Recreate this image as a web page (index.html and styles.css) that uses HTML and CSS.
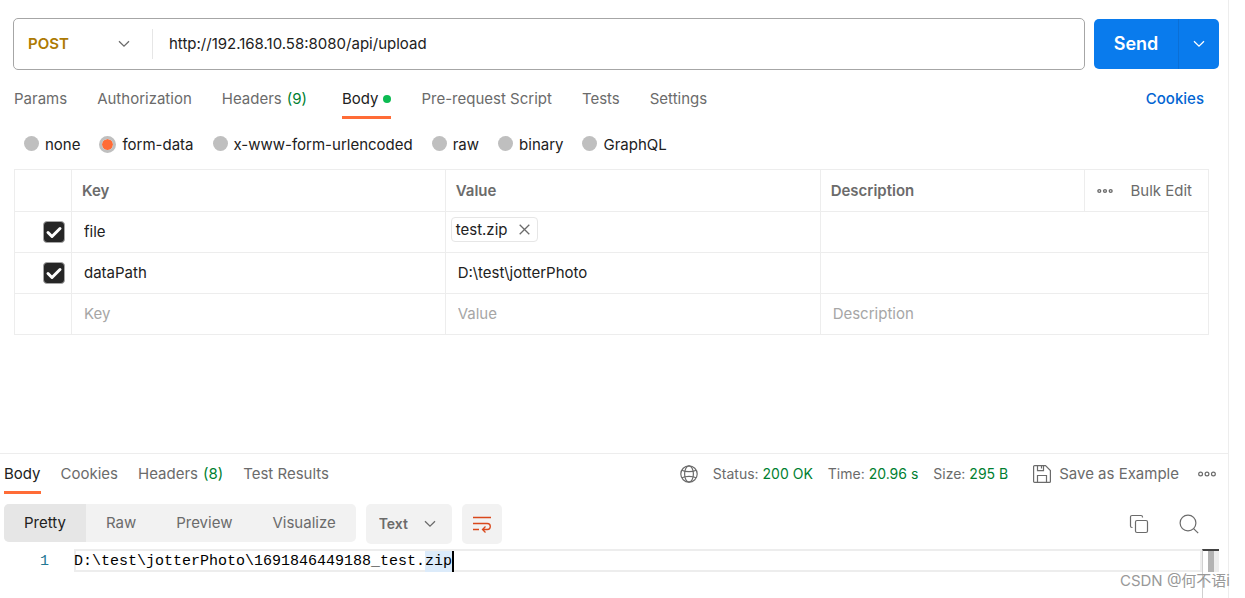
FILE: index.html
```html
<!DOCTYPE html>
<html lang="en">
<head>
    <meta charset="UTF-8">
    <meta name="viewport" content="width=device-width, initial-scale=1.0">
    <title>POST upload</title>
    <link rel="stylesheet" href="styles.css">
</head>
<body>
    <div class="app">
        <section class="request">
            <form class="request-bar">
                <div class="url-box">
                    <select class="method" aria-label="Method">
                        <option>POST</option>
                        <option>GET</option>
                    </select>
                    <input class="url" type="text" aria-label="URL" value="http://192.168.10.58:8080/api/upload">
                </div>
                <div class="send-group">
                    <button class="send" type="button">Send</button>
                    <button class="send-more" type="button" aria-label="Send options">
                        <svg width="12" height="8" viewBox="0 0 12 8" fill="none" stroke="currentColor" stroke-width="1.3"><path d="M1 1.2l5 5 5-5"/></svg>
                    </button>
                </div>
            </form>

            <nav class="tabs request-tabs">
                <button class="tab" type="button">Params</button>
                <button class="tab" type="button">Authorization</button>
                <button class="tab tab-count" type="button">Headers <span class="green">(9)</span></button>
                <button class="tab active" type="button">Body<span class="dot"></span></button>
                <button class="tab" type="button">Pre-request Script</button>
                <button class="tab" type="button">Tests</button>
                <button class="tab" type="button">Settings</button>
                <a class="cookies" href="#">Cookies</a>
            </nav>

            <div class="body-types">
                <label><input type="radio" name="type">none</label>
                <label><input type="radio" name="type" checked>form-data</label>
                <label><input type="radio" name="type">x-www-form-urlencoded</label>
                <label><input type="radio" name="type">raw</label>
                <label><input type="radio" name="type">binary</label>
                <label><input type="radio" name="type">GraphQL</label>
            </div>

            <table class="params">
                <colgroup>
                    <col class="col-check">
                    <col class="col-key">
                    <col class="col-value">
                    <col>
                    <col class="col-actions">
                </colgroup>
                <thead>
                    <tr>
                        <th></th>
                        <th>Key</th>
                        <th>Value</th>
                        <th>Description</th>
                        <th>
                            <div class="actions">
                                <button type="button" aria-label="Columns">
                                    <svg width="16" height="6" viewBox="0 0 16 6" fill="none" stroke="currentColor" stroke-width="1.4"><circle cx="2.3" cy="3" r="1.4"/><circle cx="8" cy="3" r="1.4"/><circle cx="13.7" cy="3" r="1.4"/></svg>
                                </button>
                                <button type="button">Bulk Edit</button>
                            </div>
                        </th>
                    </tr>
                </thead>
                <tbody>
                    <tr>
                        <td class="check"><input type="checkbox" aria-label="Use file" checked></td>
                        <td><input type="text" aria-label="Key" value="file"></td>
                        <td class="file-cell">
                            <span class="file">test.zip
                                <button type="button" aria-label="Remove file">
                                    <svg width="11" height="11" viewBox="0 0 11 11" fill="none" stroke="currentColor" stroke-width="1.3"><path d="M.7.7l9.6 9.6M10.3.7L.7 10.3"/></svg>
                                </button>
                            </span>
                        </td>
                        <td colspan="2"><input type="text" aria-label="Description"></td>
                    </tr>
                    <tr>
                        <td class="check"><input type="checkbox" aria-label="Use dataPath" checked></td>
                        <td><input type="text" aria-label="Key" value="dataPath"></td>
                        <td><input type="text" aria-label="Value" value="D:\test\jotterPhoto"></td>
                        <td colspan="2"><input type="text" aria-label="Description"></td>
                    </tr>
                    <tr>
                        <td></td>
                        <td><input type="text" aria-label="Key" placeholder="Key"></td>
                        <td><input type="text" aria-label="Value" placeholder="Value"></td>
                        <td colspan="2"><input type="text" aria-label="Description" placeholder="Description"></td>
                    </tr>
                </tbody>
            </table>
        </section>

        <section class="response">
            <div class="response-head">
                <nav class="tabs response-tabs">
                    <button class="tab active" type="button">Body</button>
                    <button class="tab" type="button">Cookies</button>
                    <button class="tab" type="button">Headers <span class="green">(8)</span></button>
                    <button class="tab" type="button">Test Results</button>
                </nav>
                <div class="status">
                    <svg width="18" height="18" viewBox="0 0 18 18" fill="none" stroke="currentColor" stroke-width="1.2"><circle cx="9" cy="9" r="8.2"/><ellipse cx="9" cy="9" rx="4.4" ry="8.2"/><path d="M1.8 5.2c4 2 10.4 2 14.4 0M1.8 12.8c4-2 10.4-2 14.4 0"/></svg>
                    <span>Status: <span class="green">200 OK</span></span>
                    <span>Time: <span class="green">20.96 s</span></span>
                    <span>Size: <span class="green">295 B</span></span>
                    <button class="save" type="button">
                        <svg width="18" height="18" viewBox="0 0 18 18" fill="none" stroke="currentColor" stroke-width="1.2"><path d="M1.6.6h10.9l4.9 4.9v10.9a1 1 0 0 1-1 1H1.6a1 1 0 0 1-1-1V1.6a1 1 0 0 1 1-1zM4.5.6v5h6v-5M8.5.6v2.8M4.5 17.4v-6.9h9v6.9"/></svg>
                        Save as Example
                    </button>
                    <button type="button" aria-label="More">
                        <svg width="18" height="6" viewBox="0 0 18 6" fill="none" stroke="currentColor" stroke-width="1.2"><circle cx="2.6" cy="3" r="1.9"/><circle cx="9" cy="3" r="1.9"/><circle cx="15.4" cy="3" r="1.9"/></svg>
                    </button>
                </div>
            </div>

            <div class="toolbar">
                <div class="views">
                    <button class="selected" type="button">Pretty</button>
                    <button type="button">Raw</button>
                    <button type="button">Preview</button>
                    <button type="button">Visualize</button>
                </div>
                <select class="format" aria-label="Format">
                    <option>Text</option>
                    <option>JSON</option>
                </select>
                <button class="wrap" type="button" aria-label="Wrap lines">
                    <svg width="18" height="18" viewBox="0 0 18 18" fill="none" stroke="currentColor" stroke-width="1.3"><path d="M0 2.5h18M0 8.5h14.3a2.9 2.9 0 0 1 0 6H9.5M0 14.5h6M12.5 11.5l-3 3 3 3"/></svg>
                </button>
                <div class="tools">
                    <button type="button" aria-label="Copy">
                        <svg width="20" height="20" viewBox="0 0 20 20" fill="none" stroke="currentColor" stroke-width="1.2"><rect x="6.5" y="6.5" width="12" height="12" rx="1.5"/><path d="M3.5 13.5H3A1.5 1.5 0 0 1 1.5 12V3A1.5 1.5 0 0 1 3 1.5h9A1.5 1.5 0 0 1 13.500 3v.5"/></svg>
                    </button>
                    <button type="button" aria-label="Search">
                        <svg width="20" height="20" viewBox="0 0 20 20" fill="none" stroke="currentColor" stroke-width="1.2"><circle cx="9" cy="9" r="7.9"/><path d="M14.6 14.6l4.6 4.6"/></svg>
                    </button>
                </div>
            </div>

            <div class="editor">
                <span class="line-number">1</span>
                <code class="line">D:\test\jotterPhoto\1691846449188_test.<span class="word">zip</span></code>
                <div class="ruler"><span class="thumb"></span></div>
            </div>
        </section>
        <span class="watermark">CSDN @何不语i</span>
    </div>
</body>
</html>
```

FILE: styles.css
```css
* {
    box-sizing: border-box;
}

body {
    margin: 0;
    padding-right: 16px;
    background-color: #fff;
    color: #212121;
    font-family: Inter, "Noto Sans CJK SC", sans-serif;
    font-size: 15px;
    line-height: 20px;
}

button, input, select {
    margin: 0;
    padding: 0;
    border: none;
    background-color: transparent;
    color: inherit;
    font: inherit;
}

button {
    cursor: pointer;
}

svg {
    display: block;
}

.green {
    color: #007f31;
}

.app {
    position: relative;
    display: flex;
    flex-direction: column;
    min-height: 100vh;
    border-right: 1px solid #ededed;
}

.request {
    flex: 1;
    padding: 18px 9px 0 13px;
}

/* url bar */
.request-bar {
    display: flex;
    align-items: center;
    gap: 9px;
}

.url-box {
    flex: 1;
    display: flex;
    align-items: center;
    height: 52px;
    border: 1px solid #a6a6a6;
    border-radius: 5px;
}

.method, .format {
    appearance: none;
    background-image: url("data:image/svg+xml,%3Csvg xmlns='http://www.w3.org/2000/svg' width='12' height='8' fill='none' stroke='%236b6b6b' stroke-width='1.3'%3E%3Cpath d='M1 1.2l5 5 5-5'/%3E%3C/svg%3E");
    background-repeat: no-repeat;
    font-weight: 600;
}

.method {
    width: 139px;
    height: 30px;
    padding-left: 14px;
    border-right: 1px solid #e6e6e6;
    background-position: right 22px center;
    color: #ad7a03;
}

.url {
    flex: 1;
    padding: 0 16px;
}

.send-group {
    display: flex;
    height: 50px;
    border-radius: 5px;
    background-color: #097bed;
    color: #fff;
    overflow: hidden;
}

.send {
    width: 84px;
    font-size: 18px;
    font-weight: 600;
}

.send-more {
    display: grid;
    place-items: center;
    width: 41px;
    border-left: 1px solid #0a6fd6;
}

/* tabs */
.tabs {
    display: flex;
    color: #6b6b6b;
}

.request-tabs {
    gap: 30px;
    margin-top: 19px;
    padding: 0 15px 0 1px;
}

.response-tabs {
    gap: 20px;
}

.tab {
    display: flex;
    align-items: center;
    gap: 5px;
    padding-bottom: 7px;
    border-bottom: 3px solid transparent;
}

.tab-count {
    padding-right: 5px;
}

.tab.active {
    border-bottom-color: #ff6c37;
    color: #212121;
}

.dot {
    width: 8px;
    height: 8px;
    border-radius: 50%;
    background-color: #0cbb52;
}

.cookies {
    margin-left: auto;
    color: #0265d2;
    font-weight: 500;
    text-decoration: none;
}

.body-types {
    display: flex;
    gap: 19px;
    padding: 16px 11px 14px;
}

.body-types label {
    display: flex;
    align-items: flex-start;
    gap: 6px;
}

.body-types input {
    appearance: none;
    width: 15px;
    height: 15px;
    margin-top: 1px;
    border-radius: 50%;
    background-color: #bfbfbf;
}

.body-types input:checked {
    width: 17px;
    height: 17px;
    border: 3px solid #bfbfbf;
    background-color: #ff6c37;
    background-clip: padding-box;
}

/* form-data table */
.params {
    width: calc(100% - 11px);
    margin-left: 1px;
    table-layout: fixed;
    border-collapse: collapse;
}

.col-check {
    width: 57px;
}

.col-key {
    width: 31.3%;
}

.col-value {
    width: 31.4%;
}

.col-actions {
    width: 124px;
}

.params th, .params td {
    height: 41px;
    padding: 0 12px;
    border: 1px solid #ededed;
    text-align: left;
}

.params th {
    height: 42px;
    padding: 0 10px;
    color: #6b6b6b;
    font-weight: 600;
}

.params input[type="text"] {
    display: block;
    width: 100%;
}

.params input::placeholder {
    color: #a6a6a6;
}

.params .check {
    padding: 0 6px 0 0;
}

.check input {
    appearance: none;
    display: block;
    width: 22px;
    height: 22px;
    margin-left: auto;
    border: 1px solid #a6a6a6;
    border-radius: 4px;
}

.check input:checked {
    background: #262626 url("data:image/svg+xml,%3Csvg xmlns='http://www.w3.org/2000/svg' width='20' height='20' fill='none' stroke='white' stroke-width='3' stroke-linecap='round' stroke-linejoin='round'%3E%3Cpath d='M4 10.5l4 4 8-8'/%3E%3C/svg%3E") center no-repeat;
}

.params .file-cell {
    padding: 0 0 5px 5px;
}

.file {
    display: inline-flex;
    align-items: center;
    gap: 12px;
    height: 25px;
    padding: 0 7px 0 4px;
    border: 1px solid #e6e6e6;
    border-radius: 4px;
    vertical-align: middle;
}

.file button {
    color: #6b6b6b;
}

.actions {
    display: flex;
    align-items: center;
    justify-content: space-between;
    padding: 0 6px 0 2px;
    font-weight: 400;
}

/* response */
.response {
    border-top: 1px solid #ededed;
}

.response-head {
    display: flex;
    justify-content: space-between;
    padding: 10px 12px 0 4px;
}

.status {
    display: flex;
    align-items: center;
    gap: 15px;
    height: 20px;
    color: #6b6b6b;
    font-size: 14px;
}

.save {
    display: flex;
    align-items: center;
    gap: 8px;
    margin: 0 4px 0 10px;
    font-size: 15px;
}

.toolbar {
    display: flex;
    gap: 10px;
    padding: 10px 29px 5px 4px;
    color: #6b6b6b;
}

.views {
    display: flex;
    height: 38px;
    border-radius: 5px;
    background-color: #f2f2f2;
    overflow: hidden;
}

.views button {
    padding: 0 20px;
}

.views .selected {
    background-color: #e6e6e6;
    color: #212121;
}

.format {
    width: 86px;
    height: 40px;
    padding-left: 13px;
    border-radius: 5px;
    background-color: #f2f2f2;
    background-position: right 16px center;
    font-size: 14px;
}

.wrap {
    display: grid;
    place-items: center;
    width: 40px;
    height: 40px;
    border-radius: 5px;
    background-color: #f2f2f2;
    color: #d9481c;
}

.tools {
    display: flex;
    align-items: center;
    gap: 30px;
    margin-left: auto;
}

.editor {
    display: flex;
    height: 49px;
    padding-right: 9px;
    font-family: "Liberation Mono", monospace;
    line-height: 21px;
}

.line-number {
    width: 74px;
    padding: 2px 25px 0 0;
    color: #237893;
    text-align: right;
}

.line {
    flex: 1;
    height: 23px;
    padding-top: 2px;
    box-shadow: inset 0 0 0 2px #ededed;
    color: #000;
    font: inherit;
}

.word {
    display: inline-block;
    border-right: 2px solid #000;
    background-color: #dcebfa;
}

.ruler {
    width: 17px;
    border-top: 2px solid #424242;
    border-left: 1px solid #d0d0d0;
}

.thumb {
    display: block;
    width: 11px;
    height: 21px;
    margin-left: 5px;
    border-right: 5px solid #ededed;
    background-color: #b3b3b3;
}

.watermark {
    position: absolute;
    right: -2px;
    bottom: 7px;
    color: #999;
    white-space: nowrap;
}
```
